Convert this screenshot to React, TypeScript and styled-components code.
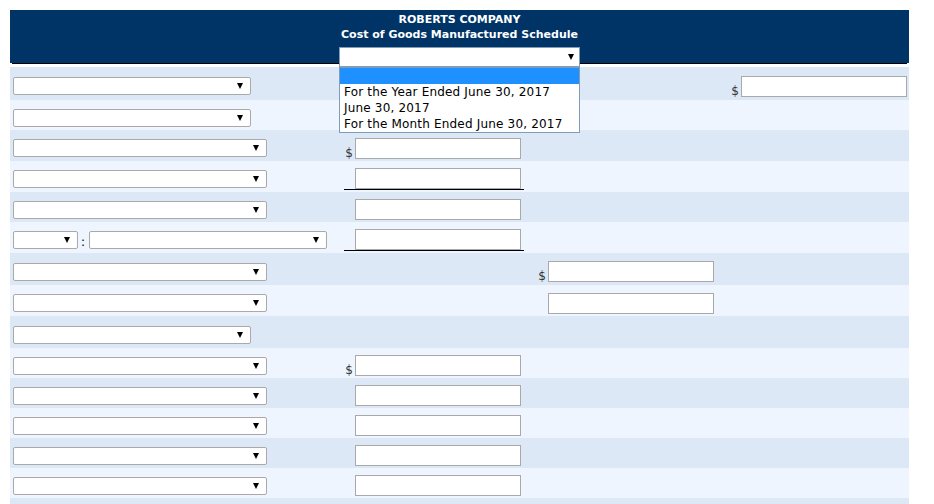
import React from 'react';
import styled, { createGlobalStyle } from 'styled-components';

const GlobalStyle = createGlobalStyle`
  html, body { margin: 0; padding: 0; background: #ffffff; }
  body { font-family: "DejaVu Sans", Verdana, sans-serif; }
`;

const Page = styled.div`
  padding: 10px 0 0 10px;
  width: 899px;
`;

const Header = styled.header`
  position: relative;
  z-index: 2;
  height: 53px;
  box-sizing: border-box;
  padding-top: 2px;
  background: #003366;
  display: flex;
  flex-direction: column;
  align-items: center;
`;

const Title = styled.div`
  color: #ffffff;
  font: bold 11px/15px "DejaVu Sans", Verdana, sans-serif;
  white-space: nowrap;
`;

const Picker = styled.div`
  position: relative;
  width: 241px;
  margin-top: 5px;
`;

const PickerBox = styled.div`
  height: 20px;
  box-sizing: border-box;
  background: #ffffff;
  border: 1px solid #7f9db9;
  display: flex;
  align-items: center;
  justify-content: flex-end;
  padding-right: 5px;
`;

const OptionList = styled.ul`
  position: absolute;
  top: 100%;
  left: 0;
  width: 100%;
  margin: 0;
  padding: 0;
  list-style: none;
  box-sizing: border-box;
  background: #ffffff;
  border: 1px solid #7f9db9;
`;

const Option = styled.li<{ $active?: boolean }>`
  height: 16px;
  line-height: 16px;
  padding-left: 4px;
  font-size: 12px;
  letter-spacing: 0.18px;
  color: #000000;
  white-space: nowrap;
  background: ${p => (p.$active ? '#1e90ff' : 'transparent')};
`;

const Caret = styled.span`
  width: 0;
  height: 0;
  border-left: 3.5px solid transparent;
  border-right: 3.5px solid transparent;
  border-top: 6px solid #000000;
`;

const Rule = styled.div`
  height: 1px;
  margin: 0 2px;
  background: #000000;
`;

const Rows = styled.div`
  margin-top: 3px;
`;

const Row = styled.div<{ $alt: boolean; $h: number }>`
  display: grid;
  grid-template-columns: 331px 180px 193px 1fr;
  align-items: center;
  height: ${p => p.$h}px;
  box-sizing: border-box;
  padding: 5px 2px 0 3px;
  background: ${p => (p.$alt ? '#eef5fe' : '#dde8f7')};
`;

const LabelCell = styled.div`
  display: flex;
  align-items: center;
`;

const SelectBox = styled.div<{ $w: number }>`
  width: ${p => p.$w}px;
  height: 18px;
  box-sizing: border-box;
  background: #ffffff;
  border: 1px solid #a9a9a9;
  border-radius: 2px;
  display: flex;
  align-items: center;
  justify-content: flex-end;
  padding-right: 7px;
`;

const Colon = styled.span`
  font-size: 12px;
  line-height: 14px;
  color: #000000;
  margin: 4px 4px 0 3px;
`;

const MoneyCell = styled.div<{ $pr: number; $line?: boolean }>`
  display: flex;
  justify-content: flex-end;
  align-items: flex-end;
  padding-right: ${p => p.$pr}px;
  border-bottom: ${p => (p.$line ? '1px solid #000000' : '0')};
`;

const Dollar = styled.span`
  font-size: 12px;
  line-height: 14px;
  color: #333333;
  margin: 0 2px -1px 0;
`;

const Field = styled.input`
  width: 166px;
  height: 21px;
  box-sizing: border-box;
  margin: 0;
  padding: 0 3px;
  border: 1px solid #a9a9a9;
  background: #ffffff;
  outline: none;
`;

type Money = { dollar?: boolean; line?: boolean };
type RowSpec = {
  label: 'short' | 'long' | 'split';
  h: number;
  b?: Money;
  c?: Money;
  d?: Money;
};

const rows: RowSpec[] = [
  { label: 'short', h: 33, d: { dollar: true } },
  { label: 'short', h: 30 },
  { label: 'long', h: 31, b: { dollar: true } },
  { label: 'long', h: 31, b: { line: true } },
  { label: 'long', h: 30, b: {} },
  { label: 'split', h: 31, b: { line: true } },
  { label: 'long', h: 32, c: { dollar: true } },
  { label: 'long', h: 31, c: {} },
  { label: 'short', h: 32 },
  { label: 'long', h: 30, b: { dollar: true } },
  { label: 'long', h: 30, b: {} },
  { label: 'long', h: 30, b: {} },
  { label: 'long', h: 30, b: {} },
  { label: 'long', h: 30, b: {} },
  { label: 'long', h: 30, b: {} },
];

const Select = ({ w }: { w: number }) => (
  <SelectBox $w={w}>
    <Caret />
  </SelectBox>
);

const MoneyField = ({ m, pr }: { m?: Money; pr: number }) =>
  m ? (
    <MoneyCell $pr={pr} $line={m.line}>
      {m.dollar && <Dollar>$</Dollar>}
      <Field type="text" />
    </MoneyCell>
  ) : (
    <div />
  );

export default function App() {
  return (
    <>
      <GlobalStyle />
      <Page>
        <Header>
          <Title>ROBERTS COMPANY</Title>
          <Title>Cost of Goods Manufactured Schedule</Title>
          <Picker>
            <PickerBox>
              <Caret />
            </PickerBox>
            <OptionList>
              <Option $active>&nbsp;</Option>
              <Option>For the Year Ended June 30, 2017</Option>
              <Option>June 30, 2017</Option>
              <Option>For the Month Ended June 30, 2017</Option>
            </OptionList>
          </Picker>
        </Header>
        <Rule />
        <Rows>
          {rows.map((r, i) => (
            <Row key={i} $alt={i % 2 === 1} $h={r.h}>
              <LabelCell>
                {r.label === 'split' ? (
                  <>
                    <Select w={65} />
                    <Colon>:</Colon>
                    <Select w={238} />
                  </>
                ) : (
                  <Select w={r.label === 'short' ? 238 : 254} />
                )}
              </LabelCell>
              <MoneyField m={r.b} pr={3} />
              <MoneyField m={r.c} pr={3} />
              <MoneyField m={r.d} pr={0} />
            </Row>
          ))}
        </Rows>
      </Page>
    </>
  );
}
